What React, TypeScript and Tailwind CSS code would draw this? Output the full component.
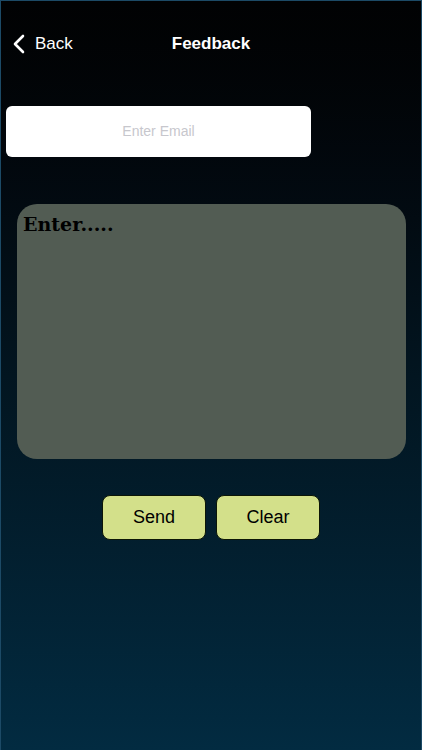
export default function App() {
  return (
    <div className="h-[750px] w-[422px] overflow-hidden border-x border-t border-[#1c4a66] bg-gradient-to-b from-[#010203] via-[#021520] to-[#022b41] font-['Liberation_Sans',sans-serif]">
      {/* nav bar */}
      <div className="relative flex h-[86px] items-center px-3">
        <button className="flex items-center gap-[10px] text-[17px] text-white">
          <svg width="12" height="20" viewBox="0 0 12 20" fill="none">
            <path d="M10 2L2 10l8 8" stroke="white" strokeWidth="2.6" strokeLinecap="round" strokeLinejoin="round" />
          </svg>
          <span>Back</span>
        </button>
        <div className="absolute left-1/2 -translate-x-1/2 text-[17px] font-bold text-white">Feedback</div>
      </div>

      <div className="mt-[19px] pl-[5px]">
        <div className="flex h-[51px] w-[305px] items-center justify-center rounded-[6px] bg-white text-[14px] text-[#c7c7cd]">
          Enter Email
        </div>
      </div>

      <div className="mt-[47px] px-[16px]">
        <div className="h-[255px] w-[389px] rounded-[20px] bg-[#525c53] px-[6px] pt-[6px]">
          <span className="font-['DejaVu_Serif',serif] text-[19px] font-bold text-black">Enter.....</span>
        </div>
      </div>

      <div className="mt-[36px] flex justify-center gap-[10px]">
        <button className="h-[45px] w-[104px] rounded-[8px] border border-[#0c1606] bg-[#d3e08a] text-[18px] text-black">Send</button>
        <button className="h-[45px] w-[104px] rounded-[8px] border border-[#0c1606] bg-[#d3e08a] text-[18px] text-black">Clear</button>
      </div>
    </div>
  );
}
